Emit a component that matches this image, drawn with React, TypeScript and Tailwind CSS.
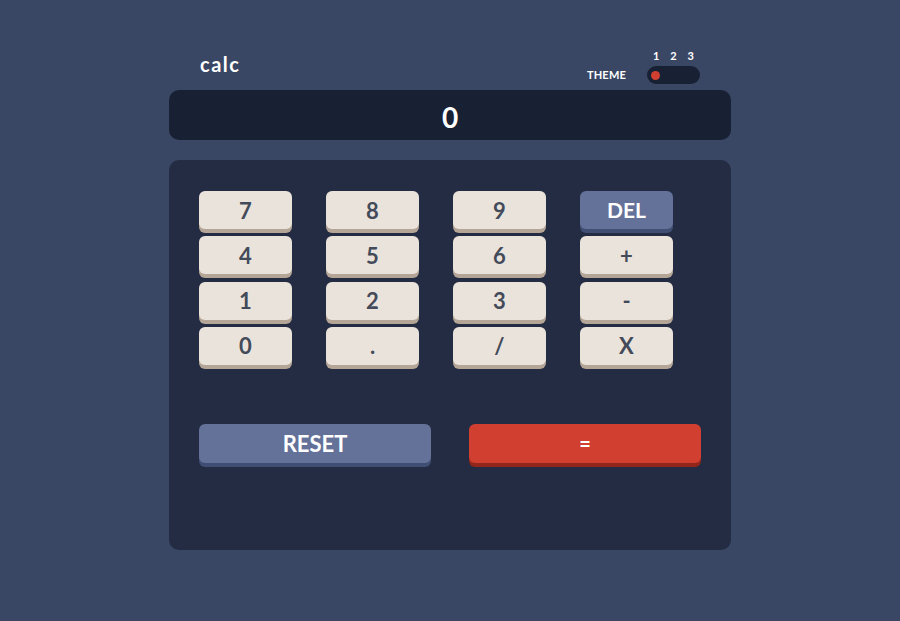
import React from "react";

const keys: { label: string; variant: "num" | "del" }[] = [
  { label: "7", variant: "num" },
  { label: "8", variant: "num" },
  { label: "9", variant: "num" },
  { label: "DEL", variant: "del" },
  { label: "4", variant: "num" },
  { label: "5", variant: "num" },
  { label: "6", variant: "num" },
  { label: "+", variant: "num" },
  { label: "1", variant: "num" },
  { label: "2", variant: "num" },
  { label: "3", variant: "num" },
  { label: "-", variant: "num" },
  { label: "0", variant: "num" },
  { label: ".", variant: "num" },
  { label: "/", variant: "num" },
  { label: "X", variant: "num" },
];

export default function App() {
  return (
    <div
      className="min-h-screen w-full bg-[#3a4764] flex justify-center"
      style={{ fontFamily: "Lato, 'Open Sans', sans-serif" }}
    >
      <div className="w-[562px] pt-[50px]">
        {/* Header */}
        <div className="flex justify-between items-end px-[31px]">
          <div className="text-white font-bold text-[20px] leading-[20px] mb-[10px] tracking-[1.5px]">
            calc
          </div>
          <div className="flex items-end gap-[21px]">
            <div className="h-[18px] flex items-center text-white font-bold text-[11px] tracking-[0.2px]">
              THEME
            </div>
            <div className="flex flex-col w-[53px]">
              <div className="flex justify-between px-[6px] text-white font-bold text-[11px] leading-[12px] mb-[4px]">
                <span>1</span>
                <span>2</span>
                <span>3</span>
              </div>
              <div className="h-[18px] rounded-full bg-[#182034] flex items-center px-[4px]">
                <div className="w-[9px] h-[9px] rounded-full bg-[#d03f2f]" />
              </div>
            </div>
          </div>
        </div>

        {/* Screen */}
        <div className="mt-[6px] h-[50px] rounded-[10px] bg-[#182034] flex items-center justify-center pt-[3px] text-white font-bold text-[28px]">
          0
        </div>

        {/* Keypad */}
        <div className="mt-[20px] h-[390px] rounded-[10px] bg-[#232c43] pt-[31px] px-[30px]">
          <div className="grid grid-cols-[repeat(4,93px)] gap-x-[34px] gap-y-[7.3px]">
            {keys.map((k) =>
              k.variant === "del" ? (
                <button
                  key={k.label}
                  className="h-[38px] rounded-[6px] bg-[#647198] shadow-[0_4px_0_#414e73] text-white font-bold text-[21px] flex items-center justify-center"
                >
                  {k.label}
                </button>
              ) : (
                <button
                  key={k.label}
                  className="h-[38px] rounded-[6px] bg-[#eae3dc] shadow-[0_4px_0_#b4a597] text-[#434a59] font-bold text-[22px] flex items-center justify-center"
                >
                  {k.label}
                </button>
              )
            )}
          </div>
          <div className="mt-[59px] flex gap-[38px]">
            <button className="w-[232px] h-[39px] rounded-[6px] bg-[#647198] shadow-[0_4px_0_#414e73] text-white font-bold text-[22px] flex items-center justify-center">
              RESET
            </button>
            <button className="w-[232px] h-[39px] rounded-[6px] bg-[#d03f2f] shadow-[0_4px_0_#93261a] text-white font-bold text-[20px] flex items-center justify-center">
              =
            </button>
          </div>
        </div>
      </div>
    </div>
  );
}
